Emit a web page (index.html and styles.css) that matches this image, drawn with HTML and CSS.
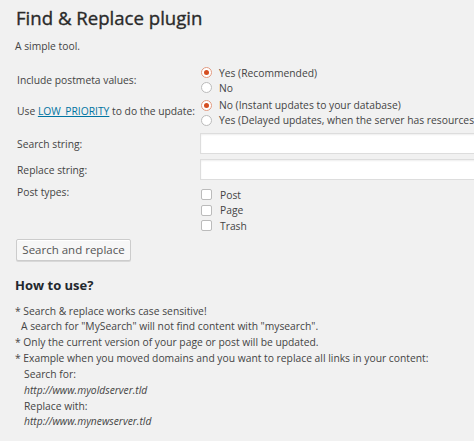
FILE: index.html
```html
<!DOCTYPE html>
<html>
<head>
<meta charset="utf-8">
<link rel="stylesheet" href="styles.css">
</head>
<body>
<div class="wrap">
  <h2 class="title">Find &amp; Replace plugin</h2>
  <p class="intro">A simple tool.</p>
  <div class="form">
    <div class="label mid">Include postmeta values:</div>
    <div class="opts">
      <div class="opt"><span class="radio on"></span>Yes (Recommended)</div>
      <div class="opt"><span class="radio"></span>No</div>
    </div>
    <div class="label mid">Use <a class="link" href="#">LOW_PRIORITY</a> to do the update:</div>
    <div class="opts r2">
      <div class="opt"><span class="radio on"></span>No (Instant updates to your database)</div>
      <div class="opt"><span class="radio"></span>Yes (Delayed updates, when the server has resources.)</div>
    </div>
    <div class="label mid r3">Search string:</div>
    <div class="r3"><input class="text" type="text"></div>
    <div class="label mid r4">Replace string:</div>
    <div class="r4"><input class="text" type="text"></div>
    <div class="label top r5">Post types:</div>
    <div class="opts checks r5">
      <div class="opt"><span class="check"></span>Post</div>
      <div class="opt"><span class="check"></span>Page</div>
      <div class="opt"><span class="check"></span>Trash</div>
    </div>
  </div>
  <button class="btn" type="button">Search and replace</button>
  <h3 class="howto">How to use?</h3>
  <div class="notes">
    <div>* Search &amp; replace works case sensitive!</div>
    <div class="ind1">A search for "MySearch" will not find content with "mysearch".</div>
    <div>* Only the current version of your page or post will be updated.</div>
    <div>* Example when you moved domains and you want to replace all links in your content:</div>
    <div class="ind2">Search for:</div>
    <div class="ind2"><em>http://www.myoldserver.tld</em></div>
    <div class="ind2">Replace with:</div>
    <div class="ind2"><em>http://www.mynewserver.tld</em></div>
  </div>
</div>
</body>
</html>
```

FILE: styles.css
```css
html, body {
  margin: 0;
  padding: 0;
  background: #f1f1f1;
  overflow: hidden;
}
body {
  font-family: "Open Sans", "Noto Sans", sans-serif;
  font-size: 10.3px;
  color: #444;
}
.wrap {
  padding-left: 15px;
}
.title {
  margin: 0;
  padding-top: 3px;
  font-size: 18.6px;
  line-height: 29px;
  font-weight: 400;
  color: #2a2a2a;
  padding-left: 1px;
  -webkit-text-stroke: 0.35px #2a2a2a;
}
.intro {
  margin: 5px 0 0;
  line-height: 18px;
}
.form {
  margin-top: 10px;
  display: grid;
  grid-template-columns: 185px 1fr;
}
.label {
  padding-left: 2px;
  white-space: nowrap;
}
.label.mid {
  align-self: center;
}
.label.top {
  line-height: 18px;
  padding-top: 3px;
}
.link {
  color: #0074a2;
}
.opts {
  display: flex;
  flex-direction: column;
}
.r2 {
  margin-top: 2.5px;
}
.opt {
  height: 15px;
  display: flex;
  align-items: center;
  white-space: nowrap;
}
.radio {
  width: 9px;
  height: 9px;
  border: 1px solid #bbb;
  border-radius: 50%;
  background: #fff;
  margin-right: 7px;
  margin-left: 1px;
  box-sizing: content-box;
  position: relative;
  flex: none;
}
.radio.on::after {
  content: "";
  position: absolute;
  left: 2px;
  top: 2px;
  width: 5px;
  height: 5px;
  border-radius: 50%;
  background: #d54e21;
}
.radio.on {
  border-color: #e29a80;
}
.check {
  width: 9px;
  height: 9px;
  border: 1px solid #bbb;
  border-radius: 2px;
  background: #fff;
  margin-right: 8px;
  margin-left: 1px;
  flex: none;
}
.checks {
  margin-top: 7px;
}
.checks .opt {
  height: 15.5px;
}
.r3 {
  margin-top: 5.5px;
}
.r4 {
  margin-top: 5px;
}
.text {
  display: block;
  box-sizing: border-box;
  width: 300px;
  height: 21px;
  margin: 0;
  border: 1px solid #ddd;
  background: #fff;
  box-shadow: inset 0 1px 2px rgba(0,0,0,0.07);
}
.btn {
  display: block;
  margin: 5px 0 0 1px;
  height: 22px;
  width: 115px;
  padding: 0;
  font-family: inherit;
  font-size: 11.5px;
  color: #555;
  background: #f7f7f7;
  border: 1px solid #ccc;
  border-radius: 2px;
  box-shadow: inset 0 1px 0 #fff, 0 1px 0 rgba(0,0,0,0.1);
}
.howto {
  margin: 15px 0 0;
  font-size: 13px;
  line-height: 18px;
  font-weight: 700;
  color: #23282d;
}
.notes {
  margin-top: 10px;
  line-height: 15.85px;
}
.ind1 {
  padding-left: 6px;
}
.ind2 {
  padding-left: 9px;
}
```
